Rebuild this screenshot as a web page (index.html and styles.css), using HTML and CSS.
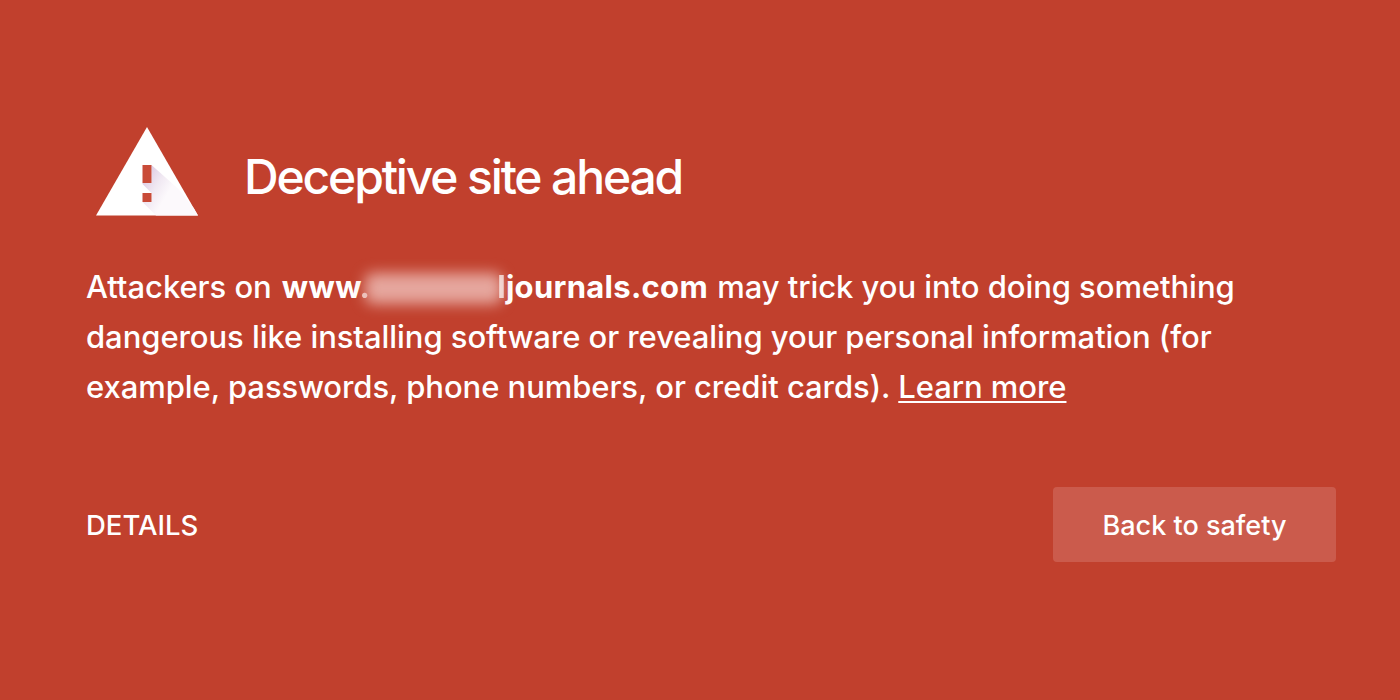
FILE: index.html
```html
<!DOCTYPE html>
<html lang="en">
<head>
  <meta charset="UTF-8">
  <meta name="viewport" content="width=device-width, initial-scale=1.0">
  <title>Deceptive site ahead</title>
  <link rel="stylesheet" href="styles.css">
</head>
<body>
  <div class="container">
    <div class="header">
      <svg class="icon" width="102" height="89" viewBox="0 0 102 89">
        <defs>
          <linearGradient id="shadow" gradientUnits="userSpaceOnUse" x1="48" y1="52" x2="72" y2="66">
            <stop offset="0" stop-color="#dfcde4"/>
            <stop offset="0.5" stop-color="#f0e8f2"/>
            <stop offset="1" stop-color="#fcf9fc"/>
          </linearGradient>
        </defs>
        <path d="M51 0L102 88.500H0Z" fill="#fff"/>
        <path d="M55.500 38L83 62.500L98 81.500L102 88.500H60L46.500 75H55.500V66L46.500 57V56H55.500Z" fill="url(#shadow)"/>
        <path d="M46.500 38h9v18h-9zM46.500 66h9v9h-9z" fill="#c94b38"/>
      </svg>
      <h1>Deceptive site ahead</h1>
    </div>

    <p class="message">
      <span class="line">Attackers on <strong>www<span class="faded">.</span><span class="hidden-name"></span><span class="faded">l</span>journals.com</strong> may trick you into doing something</span>
      <span class="line">dangerous like installing software or revealing your personal information (for</span>
      <span class="line">example, passwords, phone numbers, or credit cards). <a href="#">Learn more</a></span>
    </p>

    <div class="actions">
      <button class="details">DETAILS</button>
      <button class="btn">Back to safety</button>
    </div>
  </div>
</body>
</html>
```
FILE: styles.css
```css
body {
  margin: 0;
  background-color: #c1402d;
  color: #fff;
  font-family: Inter, "Liberation Sans", sans-serif;
}

.container {
  padding: 127px 64px 0 86px;
}

.header {
  display: flex;
  align-items: center;
  height: 89px;
  padding-left: 10px;
}

h1 {
  margin: 11px 0 0 46px;
  font-size: 48px;
  font-weight: 450;
  line-height: 58px;
  letter-spacing: -2.15px;
}

.message {
  margin: 46px 0 0;
  font-size: 31px;
  font-weight: 500;
  line-height: 50px;
  letter-spacing: -0.06px;
}

.line {
  display: block;
  white-space: nowrap;
}

strong {
  margin: 0 1px 0 2px;
  font-weight: 750;
  letter-spacing: 0.3px;
}

.faded {
  opacity: 0.7;
}

/* smudge over the hidden part of the address */
.hidden-name {
  display: inline-block;
  width: 137px;
  height: 31px;
  margin: 0 -5px;
  border-radius: 8px;
  background-color: rgba(236, 184, 178, 0.85);
  vertical-align: -6px;
  filter: blur(7px);
}

a {
  color: #fff;
  text-decoration-thickness: 2px;
  text-underline-offset: 3px;
}

.actions {
  display: flex;
  justify-content: space-between;
  align-items: center;
  margin-top: 75px;
}

button {
  border: none;
  color: #fff;
  font-family: inherit;
  font-size: 27px;
  font-weight: 500;
  cursor: pointer;
}

.details {
  padding: 0;
  background: none;
  font-size: 27.5px;
}

.btn {
  width: 283px;
  height: 75px;
  padding: 2px 0 0;
  border-radius: 4px;
  background-color: #cb5b4c;
}
```
